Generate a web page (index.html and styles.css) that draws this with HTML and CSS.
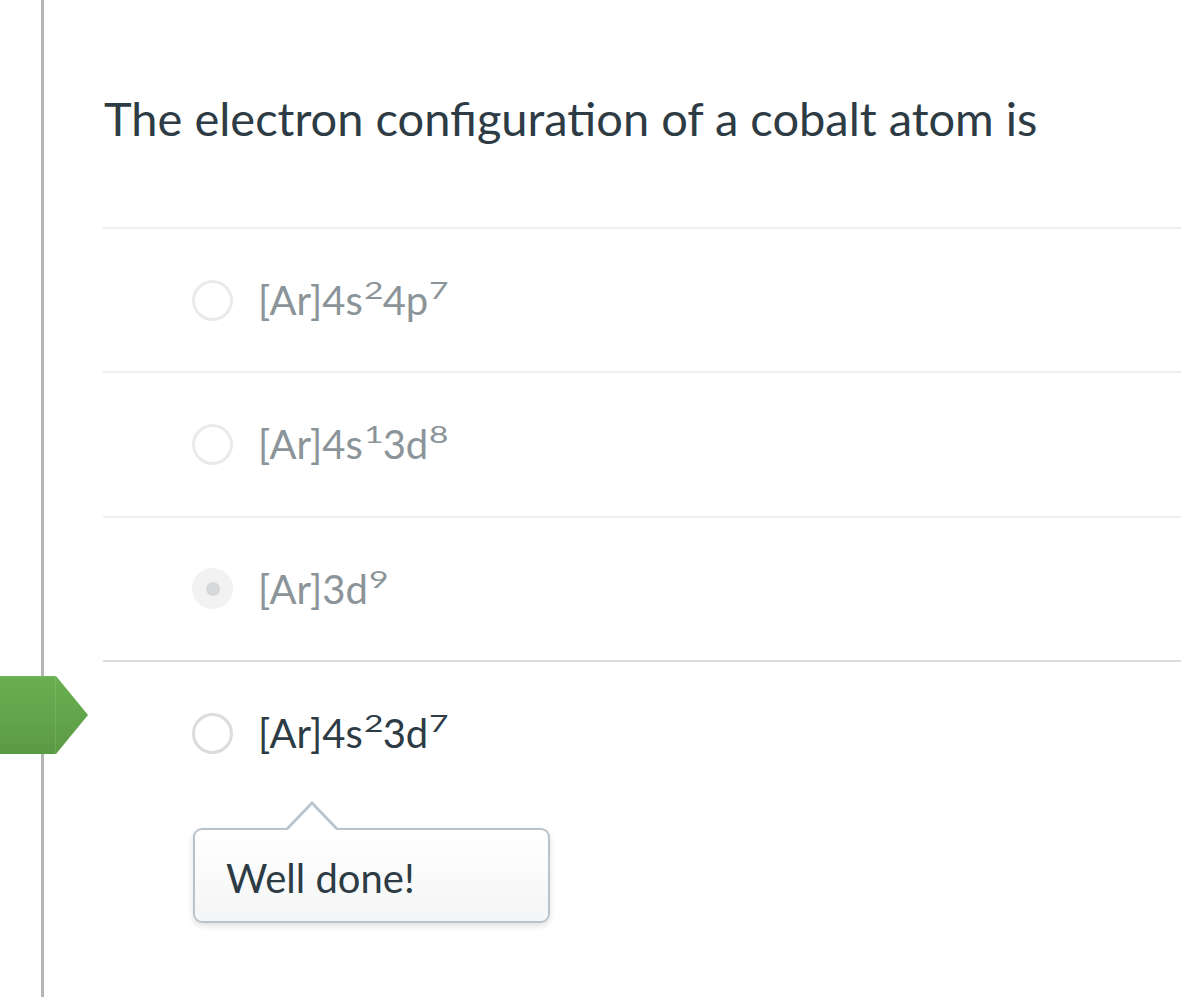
FILE: index.html
```html
<!DOCTYPE html>
<html>
<head>
<meta charset="utf-8">
<link rel="stylesheet" href="styles.css">
</head>
<body>
<div class="page">
  <div class="rail"></div>
  <div class="marker"></div>
  <main class="question">
    <h1 class="prompt">The electron configuration of a cobalt atom is</h1>
    <ul class="answers">
      <li class="answer muted"><span class="radio"></span><span class="label">[Ar]4s<span class="sup">2</span>4p<span class="sup">7</span></span></li>
      <li class="answer muted"><span class="radio"></span><span class="label">[Ar]4s<span class="sup">1</span>3d<span class="sup">8</span></span></li>
      <li class="answer muted"><span class="radio checked"></span><span class="label">[Ar]3d<span class="sup">9</span></span></li>
      <li class="answer correct"><span class="radio"></span><span class="label">[Ar]4s<span class="sup">2</span>3d<span class="sup">7</span></span></li>
    </ul>
    <div class="feedback">
      <div class="bubble">Well done!</div>
    </div>
  </main>
</div>
</body>
</html>
```
FILE: styles.css
```css
html, body {
  margin: 0;
  padding: 0;
  background: #ffffff;
}
body {
  font-family: Lato, "Open Sans", sans-serif;
  color: #2d3b45;
  overflow: hidden;
}
.page {
  position: relative;
  display: flex;
  height: 997px;
}
.rail {
  flex: none;
  width: 41px;
  border-right: 3px solid #b5b5b5;
}
.marker {
  position: absolute;
  left: 0;
  top: 676px;
  width: 88px;
  height: 78px;
  background:
    linear-gradient(90deg, transparent 55px, rgba(255,255,255,0.12) 55px, rgba(255,255,255,0.12) 56px, transparent 56px),
    linear-gradient(180deg, #73b95a 0px, #69ae50 2px, #62a54b 50%, #5a9a44 100%);
  clip-path: polygon(0 0, 56px 0, 88px 39px, 56px 78px, 0 78px);
}
.question {
  flex: 1;
  padding-left: 59px;
  min-width: 0;
}
.prompt {
  margin: 90px 0 0 1px;
  font-size: 47px;
  line-height: 57px;
  font-weight: 400;
  color: #2d3b45;
  letter-spacing: 0;
}
.answers {
  list-style: none;
  margin: 80px 0 0 0;
  padding: 0;
}
.answer {
  display: flex;
  align-items: center;
  height: 142.3px;
  border-top: 2px solid #eeeeee;
  padding-left: 89px;
}
.answer.correct {
  border-top-color: #dddddd;
}
.radio {
  flex: none;
  box-sizing: border-box;
  width: 41px;
  height: 41px;
  border-radius: 50%;
  border: 3px solid #e9eaeb;
  background: #ffffff;
  display: flex;
  align-items: center;
  justify-content: center;
}
.radio.checked {
  background: #f2f2f3;
  border-color: #f2f2f3;
}
.radio.checked::after {
  content: "";
  width: 14px;
  height: 14px;
  border-radius: 50%;
  background: #d7d8d9;
}
.correct .radio {
  border-color: #dcdcdc;
}
.label {
  margin-left: 25px;
  font-size: 40px;
  line-height: 48px;
  color: #8b9499;
}
.correct .label {
  color: #2d3b45;
}
.sup {
  display: inline-block;
  font-size: 24px;
  line-height: 24px;
  vertical-align: 16px;
  transform: scaleX(1.4);
  transform-origin: left center;
  margin-right: 5px;
  margin-left: 1px;
}
.feedback {
  padding-left: 90px;
  padding-top: 24px;
}
.bubble {
  position: relative;
  box-sizing: border-box;
  width: 357px;
  height: 95px;
  border: 2px solid #b9c3cc;
  border-radius: 9px;
  background: linear-gradient(180deg, #ffffff 0%, #f4f5f6 100%);
  box-shadow: 0 3px 6px rgba(0, 0, 0, 0.12);
  padding: 24px 0 0 31px;
  font-size: 40px;
  line-height: 48px;
  color: #2d3b45;
}
.bubble::before {
  content: "";
  position: absolute;
  left: 90px;
  top: -29px;
  width: 0;
  height: 0;
  border-left: 27px solid transparent;
  border-right: 27px solid transparent;
  border-bottom: 28px solid #b9c3cc;
}
.bubble::after {
  content: "";
  position: absolute;
  left: 92px;
  top: -25px;
  width: 0;
  height: 0;
  border-left: 25px solid transparent;
  border-right: 25px solid transparent;
  border-bottom: 26px solid #ffffff;
}
```
